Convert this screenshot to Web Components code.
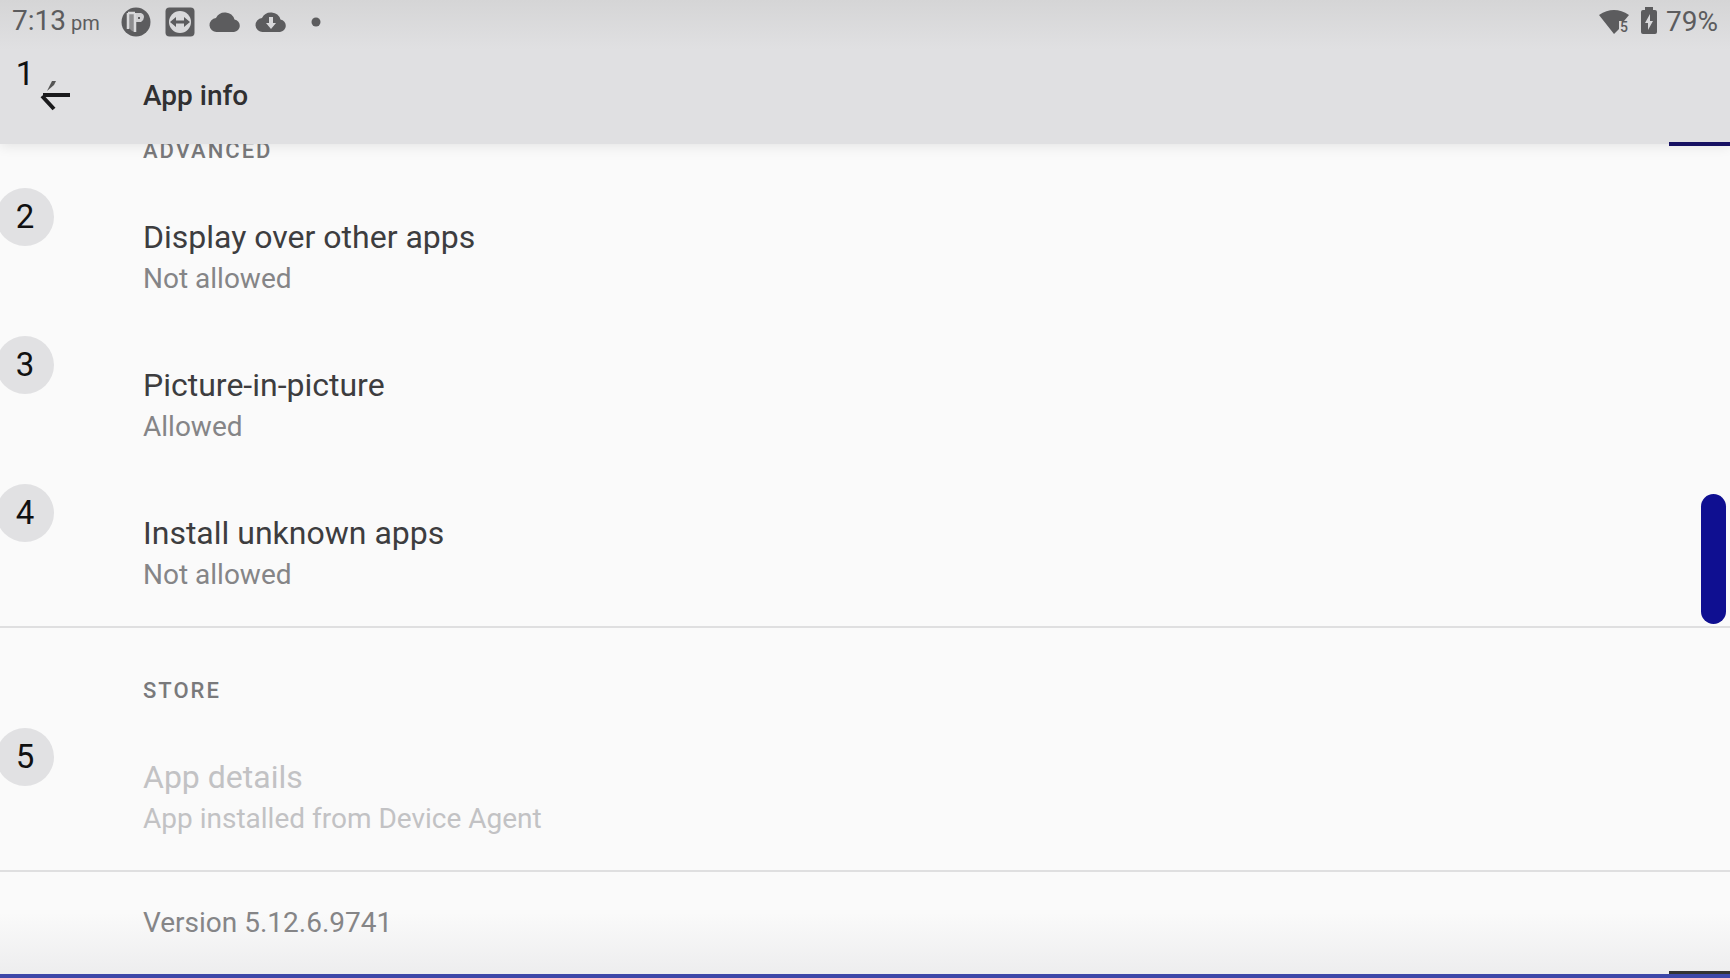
<!DOCTYPE html>
<html lang="en">
<head>
<meta charset="utf-8">
<title>App info</title>
<style>
html, body { margin: 0; }
body { font-family: Roboto, "Noto Sans", sans-serif; background: #fafafa; color: #3a3a3c; }
</style>
</head>
<body>
<info-screen></info-screen>
<script>
function define(name, html) {
  const template = document.createElement('template');
  template.innerHTML = html;
  customElements.define(name, class extends HTMLElement {
    constructor() {
      super();
      this.attachShadow({ mode: 'open' }).append(template.content.cloneNode(true));
    }
  });
}

define('number-badge', `
<style>
:host { display: grid; place-items: center; width: 58px; height: 58px; border-radius: 50%; background: #e1e1e3; color: #111; font-size: 33px; line-height: 32px; }
</style>
<slot></slot>`);

define('status-bar', `
<style>
:host { display: flex; align-items: center; justify-content: space-between; height: 44px; padding: 0 12px; color: #5c5c5e; font-size: 28px; line-height: 46px; }
.group { display: flex; align-items: center; gap: 14px; }
.right { gap: 8px; }
.time { margin-right: 7px; }
small { font-size: 20px; margin-left: 5px; }
svg { display: block; fill: #5c5c5e; }
</style>
<div class="group">
  <span class="time">7:13<small>pm</small></span>
  <svg width="30" height="30" viewBox="0 0 30 30"><circle cx="15" cy="15" r="14.5"/><path fill="#8e8e90" d="M8 7h6v18q-4-1-6-4z"/><path fill="none" stroke="#d9d9db" stroke-width="2.5" d="M7 22V6M14 6V25M7 6H14"/><path fill="#d0d0d2" d="M15 6h5q3 1 3 4t-3 5h-5z"/><path d="M17 10h2v2h-2z"/></svg>
  <svg width="30" height="30" viewBox="0 0 30 30"><rect x=".5" y=".5" width="29" height="29" rx="4"/><circle cx="15" cy="15" r="11" fill="#d9d9db"/><path d="M5 15l6-5v3.500h8V10l6 5-6 5v-3.500h-8V20z"/></svg>
  <svg width="32" height="30" viewBox="0 0 32 30"><path d="M8 25a7 7 0 0 1-1-14A10 10 0 0 1 25.500 12.500 6.300 6.300 0 0 1 25 25z"/></svg>
  <svg width="32" height="30" viewBox="0 0 32 30"><path d="M8 25a7 7 0 0 1-1-14A10 10 0 0 1 25.500 12.500 6.300 6.300 0 0 1 25 25z"/><path fill="#d9d9db" d="M14 10h4v6h3l-5 6-5-6h3z"/></svg>
  <svg width="32" height="30" viewBox="0 0 32 30"><circle cx="15" cy="15" r="4.500"/></svg>
</div>
<div class="group right">
  <svg width="34" height="30" viewBox="0 0 34 30"><path d="M1 8Q16-2 31 8L26 14H21V22L16 27z"/><text x="22" y="25" font-size="14" font-weight="500">5</text></svg>
  <svg width="18" height="30" viewBox="0 0 18 30"><path d="M5 3V0h8v3h2q2 0 2 2v20q0 2-2 2H3q-2 0-2-2V5q0-2 2-2z"/><path fill="#d9d9db" d="M10 7L5 16h3v7l5-9h-3z"/></svg>
  <span>79%</span>
</div>`);

define('app-bar', `
<style>
:host { display: block; position: relative; z-index: 1; background: linear-gradient(#d5d5d6, #e0e0e2 50px); box-shadow: 0 2px 12px #00000018; }
.bar { position: relative; display: flex; align-items: center; height: 100px; padding-left: 39px; }
button { display: block; width: 32px; height: 34px; padding: 0; border: 0; background: none; }
svg { display: block; }
number-badge { position: absolute; left: -4px; top: 1px; background: none; }
h1 { margin: 4px 0 0 72px; font-size: 28px; line-height: 36px; font-weight: 500; color: #303032; }
.edge { position: absolute; right: 0; bottom: -2px; width: 61px; height: 4px; background: #171163; }
</style>
<status-bar></status-bar>
<div class="bar">
  <button aria-label="Back"><svg width="32" height="34" viewBox="0 0 32 34" fill="none" stroke="#1a1a1c"><path stroke-width="4" d="M31 18H4M3 19L15 32"/><path fill="#555" stroke="none" d="M8 14L13 4L17 4L15 8z"/></svg></button>
  <number-badge>1</number-badge>
  <h1>App info</h1>
  <div class="edge"></div>
</div>`);

define('section-heading', `
<style>
:host { display: flex; align-items: flex-end; box-sizing: border-box; height: 95px; padding: 0 143px 22px; }
:host([scrolled]) { height: 38px; }
h2 { margin: 0; font-size: 22px; line-height: 18px; font-weight: 500; letter-spacing: 2px; color: #79797b; text-transform: uppercase; }
</style>
<h2><slot></slot></h2>`);

define('setting-row', `
<style>
:host { display: block; }
button { position: relative; display: flex; flex-direction: column; justify-content: flex-start; align-items: flex-start; box-sizing: border-box; width: 100%; height: 148px; margin: 0; padding: 34px 143px 0; border: 0; background: none; font: inherit; text-align: left; color: #3d3d3f; font-size: 32px; line-height: 42px; }
number-badge { position: absolute; left: -4px; top: 6px; color: #111; }
.note { font-size: 28px; line-height: 42px; color: #858587; }
:host([disabled]) button, :host([disabled]) .note { color: #c2c2c4; }
</style>
<button><number-badge><slot name="number"></slot></number-badge><slot></slot><span class="note"><slot name="note"></slot></span></button>`);

define('info-screen', `
<style>
:host { display: flex; flex-direction: column; min-height: 100vh; box-sizing: border-box; border-bottom: 4px solid #3d47a8; position: relative; overflow: hidden; }
main { flex: 1; display: flex; flex-direction: column; }
section { border-bottom: 2px solid #dfdfe0; }
section + section { margin-top: -1px; }
footer { flex: 1; position: relative; padding: 30px 143px 20px; font-size: 28px; line-height: 42px; color: #858587; box-sizing: border-box; background: linear-gradient(#fafafa 40%, #ededee); }
footer p { margin: 0; }
.edge { position: absolute; right: 0; bottom: 0; width: 61px; height: 3px; background: #333; }
.thumb { position: absolute; right: 4px; top: 494px; width: 25px; height: 130px; border-radius: 13px; background: #0f0f91; }
</style>
<app-bar></app-bar>
<main>
  <section>
    <section-heading scrolled>Advanced</section-heading>
    <setting-row><span slot="number">2</span>Display over other apps<span slot="note">Not allowed</span></setting-row>
    <setting-row><span slot="number">3</span>Picture-in-picture<span slot="note">Allowed</span></setting-row>
    <setting-row><span slot="number">4</span>Install unknown apps<span slot="note">Not allowed</span></setting-row>
  </section>
  <section>
    <section-heading>Store</section-heading>
    <setting-row disabled><span slot="number">5</span>App details<span slot="note">App installed from Device Agent</span></setting-row>
  </section>
  <footer><p>Version 5.12.6.9741</p><div class="edge"></div></footer>
</main>
<div class="thumb"></div>`);
</script>
</body>
</html>
